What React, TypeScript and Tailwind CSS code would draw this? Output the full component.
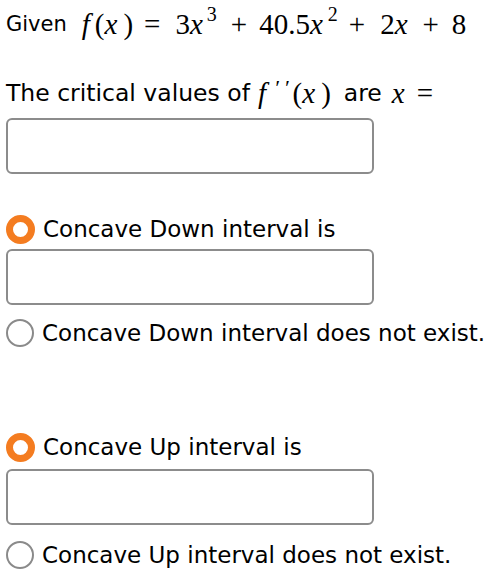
export default function App() {
  const sans = "font-['DejaVu_Sans',sans-serif]"
  const math = "font-['Liberation_Serif',serif]"

  const Radio = ({ on }: { on: boolean }) =>
    on ? (
      <span className="w-[29px] h-[29px] rounded-full border-[7px] border-[#f47c20] bg-white shrink-0" />
    ) : (
      <span className="w-[28px] h-[28px] rounded-full border-2 border-[#8a8a8a] bg-white shrink-0" />
    )

  const Box = () => <div className="w-[368px] h-[56px] rounded-[6px] border-2 border-[#8c8c8c] bg-white" />

  return (
    <main className={`w-[493px] h-[577px] bg-white text-black pl-[6px] ${sans}`}>
      {/* given function */}
      <div className="h-[50px] flex items-center text-[21px]">
        <span>Given</span>
        <span className={`${math} text-[29px] ml-[15px] flex items-baseline whitespace-nowrap`}>
          <i>f</i>
          <span className="ml-[5px]">(</span>
          <i>x</i>
          <span className="ml-[6px]">)</span>
          <span className="ml-[11px]">=</span>
          <span className="ml-[15px]">3</span>
          <i>x</i>
          <span className="text-[20px] relative -top-[13px] ml-[4px]">3</span>
          <span className="ml-[14px]">+</span>
          <span className="ml-[12px]">40.5</span>
          <i>x</i>
          <span className="text-[20px] relative -top-[13px] ml-[5px]">2</span>
          <span className="ml-[11px]">+</span>
          <span className="ml-[15px]">2</span>
          <i>x</i>
          <span className="ml-[15px]">+</span>
          <span className="ml-[13px]">8</span>
        </span>
      </div>

      {/* critical values */}
      <div className="mt-[22px] h-[44px] flex items-center text-[23.5px] whitespace-nowrap">
        <span>The critical values of</span>
        <span className={`${math} text-[29px] ml-[8px] flex items-baseline`}>
          <i>f</i>
          <i className="ml-[8px] text-[22px] relative -top-[8px]">′</i>
          <i className="ml-[5px] text-[22px] relative -top-[8px]">′</i>
          <span className="ml-[4px]">(</span>
          <i>x</i>
          <span className="ml-[6px]">)</span>
        </span>
        <span className="ml-[13px]">are</span>
        <span className={`${math} text-[29px] ml-[10px] flex items-baseline`}>
          <i>x</i>
          <span className="ml-[12px]">=</span>
        </span>
      </div>

      <div className="mt-[2px]">
        <Box />
      </div>

      {/* concave down */}
      <div className="mt-[35px] h-[40px] flex items-center gap-[8px] text-[23px]">
        <Radio on />
        <span>Concave Down interval is</span>
      </div>
      <Box />
      <div className="mt-[8px] h-[40px] flex items-center gap-[8px] text-[23px]">
        <Radio on={false} />
        <span>Concave Down interval does not exist.</span>
      </div>

      {/* concave up */}
      <div className="mt-[74px] h-[40px] flex items-center gap-[8px] text-[23px]">
        <Radio on />
        <span>Concave Up interval is</span>
      </div>
      <div className="mt-[2px]">
        <Box />
      </div>
      <div className="mt-[10px] h-[40px] flex items-center gap-[8px] text-[23px]">
        <Radio on={false} />
        <span>Concave Up interval does not exist.</span>
      </div>
    </main>
  )
}
